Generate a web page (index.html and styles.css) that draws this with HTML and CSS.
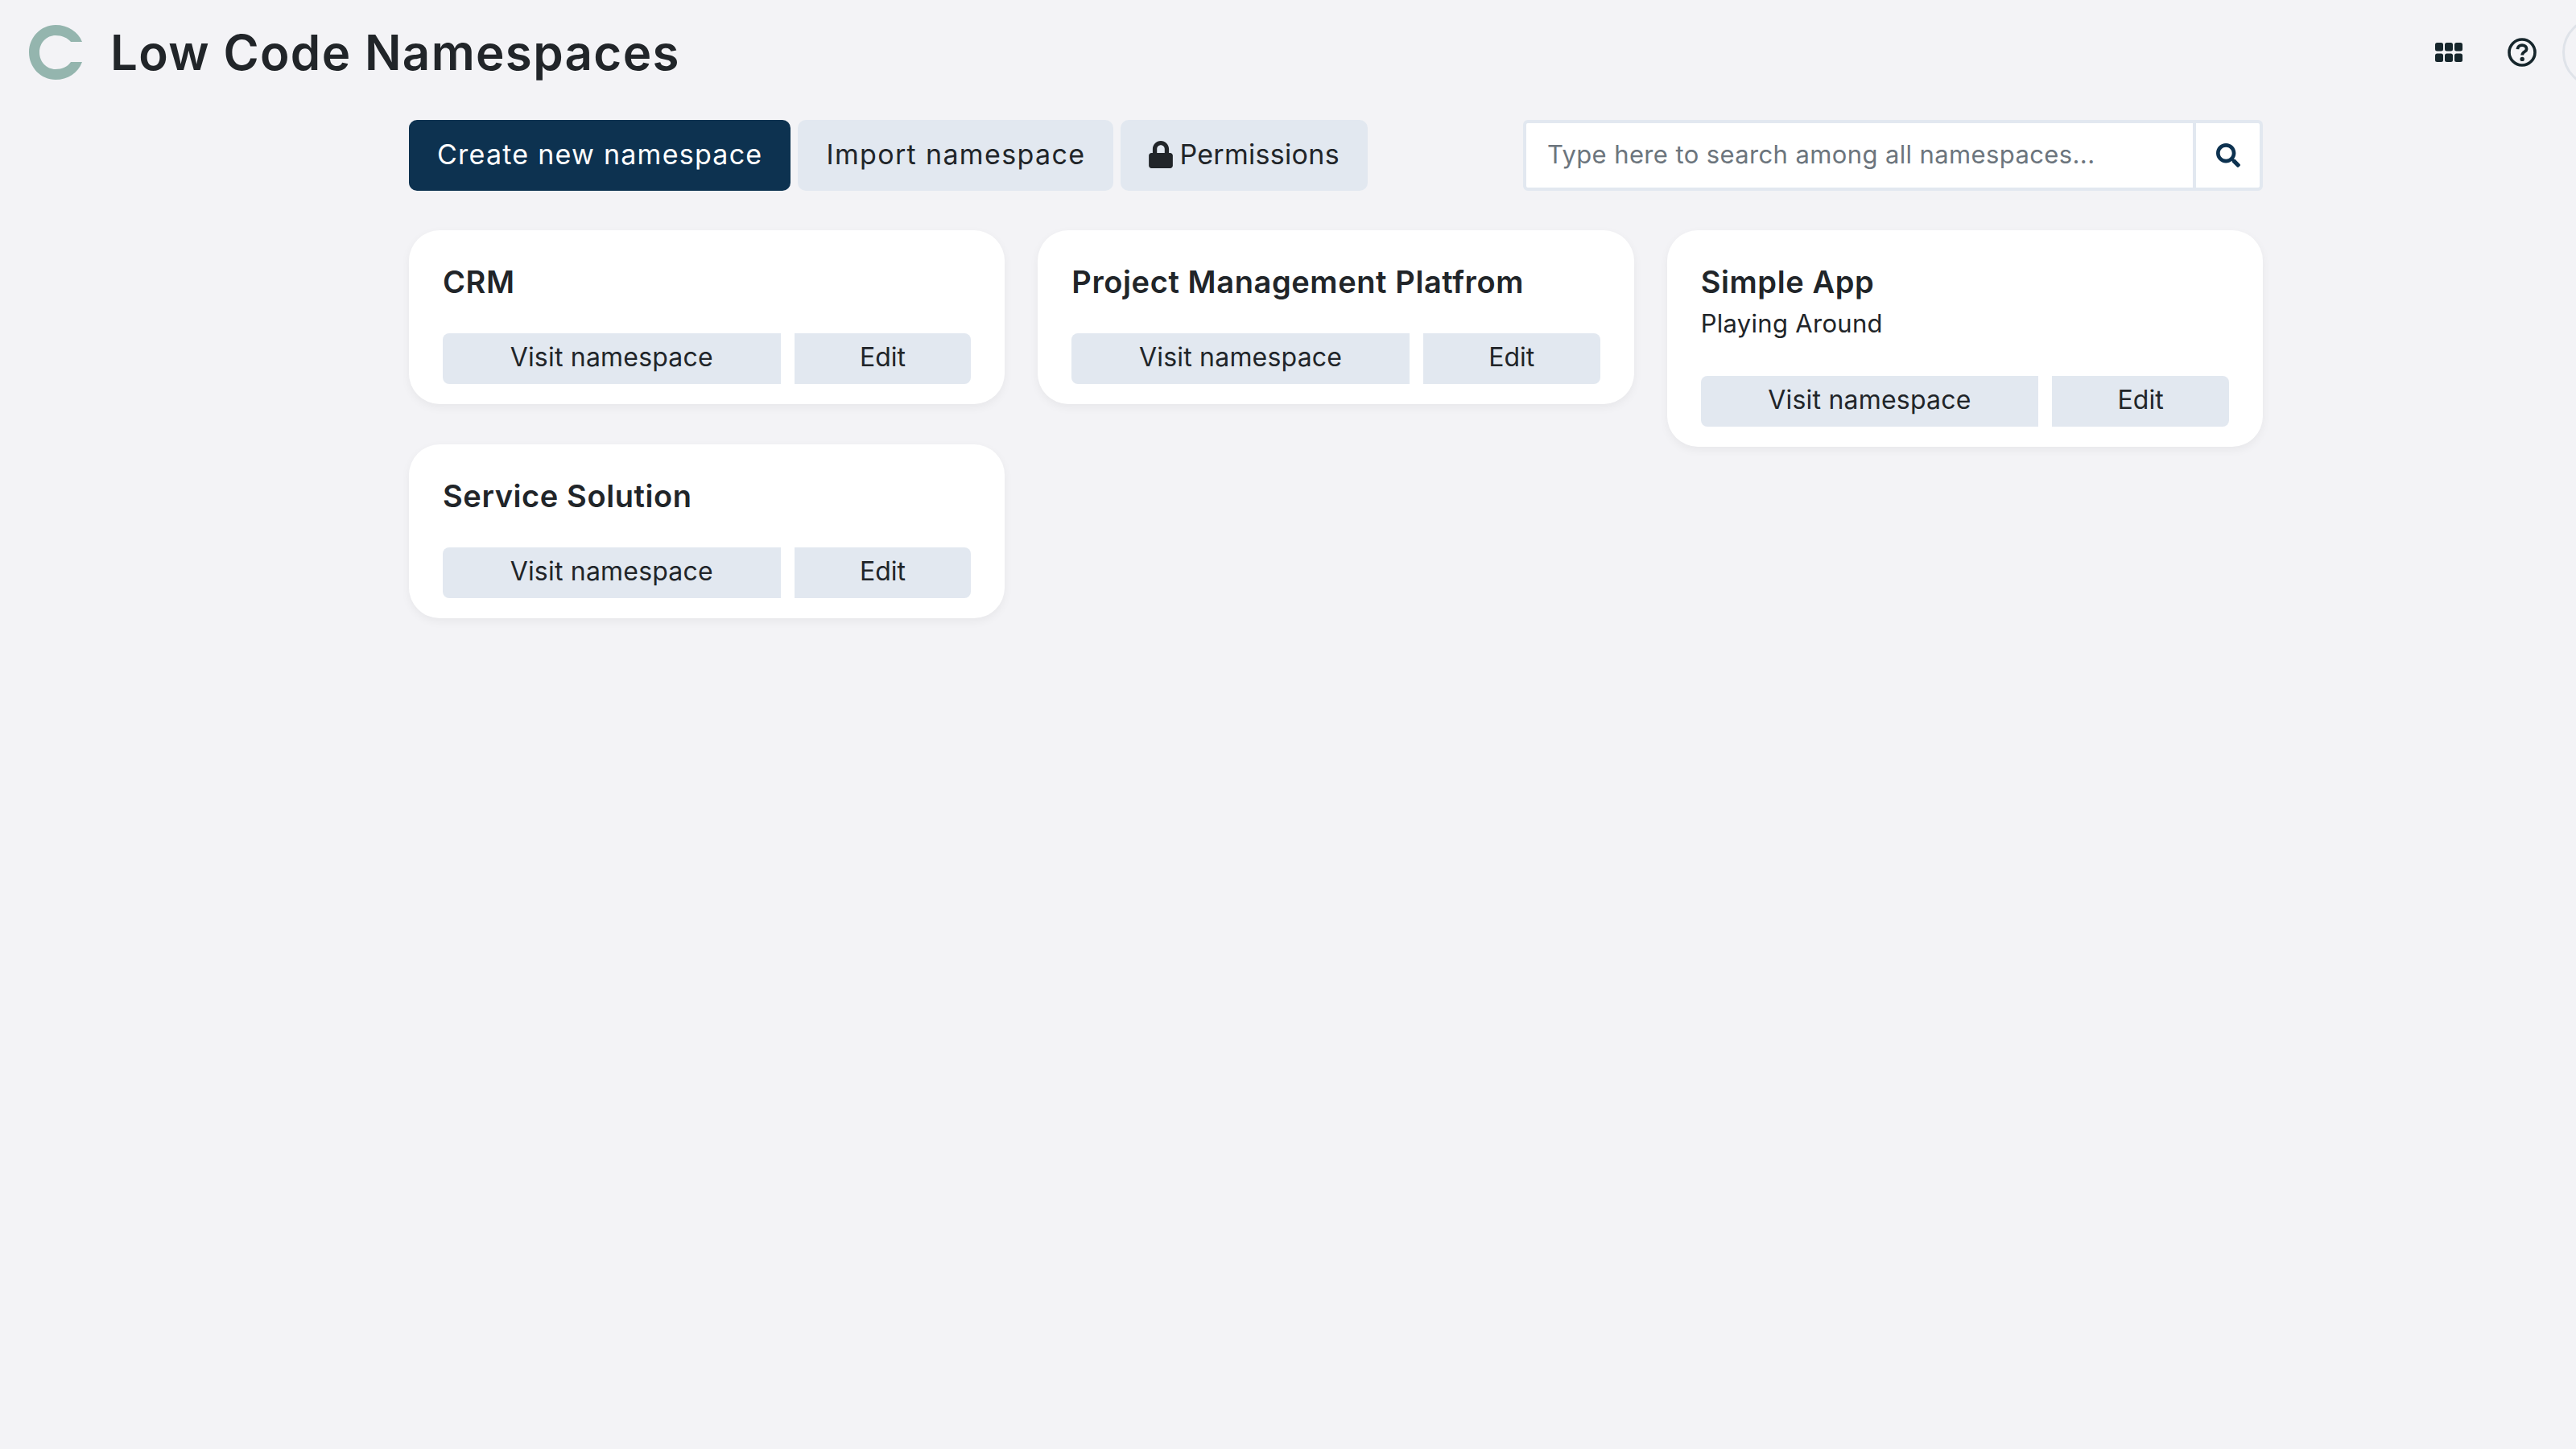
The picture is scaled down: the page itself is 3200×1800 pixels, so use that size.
FILE: index.html
```html
<!DOCTYPE html>
<html lang="en">
<head>
<meta charset="utf-8">
<title>Low Code Namespaces</title>
<link rel="stylesheet" href="styles.css">
</head>
<body>
<header class="topbar">
  <svg class="logo" viewBox="0 0 66 68"><path fill="#94b5ae" d="M66 21C61 8 48 0 33 0C15 0 0 15 0 34C0 53 15 68 33 68C48 68 61 60 66 46H52C48 52 41 55 33 55C22 55 13 46 13 34C13 22 22 13 33 13C41 13 48 16 52 21Z"/></svg>
  <h1 class="page-title">Low Code Namespaces</h1>
  <div class="top-actions">
    <svg class="grid-icon" viewBox="0 0 34 24"><g fill="#16262c"><rect width="10" height="10.5" rx="2.5"/><rect x="12" width="10" height="10.5" rx="2.5"/><rect x="24" width="10" height="10.5" rx="2.5"/><rect y="13.5" width="10" height="10.5" rx="2.5"/><rect x="12" y="13.5" width="10" height="10.5" rx="2.5"/><rect x="24" y="13.5" width="10" height="10.5" rx="2.5"/></g></svg>
    <svg class="help-icon" viewBox="0 0 36 36"><circle cx="18" cy="18" r="16" fill="none" stroke="#16262c" stroke-width="3.6"/><path d="M12.4 14.2C12.6 11 15 9.2 18 9.2C21.4 9.2 23.6 11.2 23.6 13.9C23.6 17.4 18.2 17.2 18.2 21.4" fill="none" stroke="#16262c" stroke-width="3.8"/><circle cx="18.2" cy="26.4" r="2.7" fill="#16262c"/></svg>
    <div class="avatar"></div>
  </div>
</header>
<main class="content">
  <div class="toolbar">
    <button class="btn btn-primary">Create new namespace</button>
    <button class="btn btn-import">Import namespace</button>
    <button class="btn btn-perm"><svg class="lock" viewBox="0 0 448 512"><path fill="#212529" d="M400 224h-24v-72C376 68.2 307.8 0 224 0S72 68.2 72 152v72H48c-26.5 0-48 21.5-48 48v192c0 26.5 21.5 48 48 48h352c26.5 0 48-21.5 48-48V272c0-26.5-21.5-48-48-48zm-104 0H152v-72c0-39.7 32.3-72 72-72s72 32.3 72 72v72z"/></svg>Permissions</button>
    <form class="search">
      <input class="search-input" type="text" placeholder="Type here to search among all namespaces...">
      <button class="search-btn" type="button"><svg class="search-icon" viewBox="0 0 512 512"><path fill="#0d3250" d="M505 442.7L405.3 343c-4.5-4.5-10.6-7-17-7H372c27.6-35.3 44-79.7 44-128C416 93.1 322.9 0 208 0S0 93.1 0 208s93.1 208 208 208c48.3 0 92.7-16.4 128-44v16.3c0 6.4 2.5 12.5 7 17l99.7 99.7c9.4 9.4 24.6 9.4 33.9 0l28.3-28.3c9.4-9.4 9.4-24.6.1-34zM208 336c-70.7 0-128-57.2-128-128 0-70.7 57.2-128 128-128 70.7 0 128 57.2 128 128 0 70.7-57.2 128-128 128z"/></svg></button>
    </form>
  </div>
  <section class="cards">
    <div class="card-column">
      <article class="card">
        <h2 class="card-title">CRM</h2>
        <div class="card-actions"><a class="action visit">Visit namespace</a><a class="action edit">Edit</a></div>
      </article>
      <article class="card">
        <h2 class="card-title">Service Solution</h2>
        <div class="card-actions"><a class="action visit">Visit namespace</a><a class="action edit">Edit</a></div>
      </article>
    </div>
    <div class="card-column">
      <article class="card">
        <h2 class="card-title">Project Management Platfrom</h2>
        <div class="card-actions"><a class="action visit">Visit namespace</a><a class="action edit">Edit</a></div>
      </article>
    </div>
    <div class="card-column">
      <article class="card">
        <h2 class="card-title">Simple App</h2>
        <p class="card-sub">Playing Around</p>
        <div class="card-actions"><a class="action visit">Visit namespace</a><a class="action edit">Edit</a></div>
      </article>
    </div>
  </section>
</main>
</body>
</html>
```

FILE: styles.css
```css
* { box-sizing: border-box; }
html, body { margin: 0; height: 100%; }
body {
  background: #f3f3f6;
  color: #212529;
  font-family: Inter, "Liberation Sans", sans-serif;
  overflow: hidden;
}
.topbar {
  display: flex;
  align-items: center;
  height: 130px;
  padding-left: 36px;
}
.logo { width: 66px; height: 68px; flex: none; }
.page-title {
  margin: 0 0 0 35px;
  font-size: 60px;
  font-weight: 600;
  letter-spacing: 1.35px;
  line-height: 1;
}
.top-actions {
  margin-left: auto;
  display: flex;
  align-items: center;
  width: 175px;
  flex: none;
}
.grid-icon { width: 34px; height: 24px; flex: none; }
.help-icon { width: 36px; height: 36px; margin-left: 56px; flex: none; }
.avatar {
  width: 88px;
  height: 88px;
  flex: none;
  margin-left: 32px;
  border: 3px solid #dfe3e9;
  border-radius: 50%;
}
.content { margin-left: 508px; width: 2303px; padding-top: 19px; }
.toolbar { display: flex; align-items: stretch; gap: 9px; height: 88px; }
.btn {
  display: flex;
  align-items: center;
  padding: 0 35px 3px;
  border: 0;
  border-radius: 10px;
  background: #e2e8f0;
  color: #212529;
  font-family: inherit;
  font-size: 34px;
  letter-spacing: 1.25px;
}
.btn-primary { background: #0d3250; color: #fff; }
.btn-import { letter-spacing: 1.35px; }
.btn-perm { letter-spacing: 0.3px; }
.lock { width: 30px; height: 34px; margin-right: 8px; }
.search {
  display: flex;
  margin-left: auto;
  width: 919px;
  border: 4px solid #e2e8f0;
  border-radius: 6px;
  background: #fff;
}
.search-input {
  flex: 1;
  min-width: 0;
  padding: 0 26px 3px;
  border: 0;
  outline: 0;
  background: transparent;
  font-family: inherit;
  font-size: 31px;
  letter-spacing: 0.38px;
  color: #212529;
}
.search-input::placeholder { color: #6c757d; opacity: 1; }
.search-btn {
  display: flex;
  align-items: center;
  justify-content: center;
  width: 83px;
  padding: 0;
  border: 0;
  border-left: 4px solid #e2e8f0;
  background: transparent;
}
.search-icon { width: 30px; height: 30px; }
.cards {
  display: grid;
  grid-template-columns: repeat(3, 1fr);
  column-gap: 41px;
  align-items: start;
  margin-top: 49px;
}
.card-column { display: flex; flex-direction: column; gap: 50px; }
.card {
  padding: 42px 42px 25px;
  background: #fff;
  border-radius: 38px;
  box-shadow: 0 4px 12px rgba(0, 0, 0, 0.05);
}
.card-title {
  margin: 0;
  font-size: 38px;
  font-weight: 600;
  letter-spacing: 0.6px;
  line-height: 44px;
}
.card-sub {
  margin: 8px 0 0;
  padding-bottom: 1px;
  font-size: 31px;
  letter-spacing: 0.3px;
  line-height: 44px;
  font-weight: 400;
}
.card-actions { display: flex; gap: 17px; margin-top: 42px; }
.action {
  display: flex;
  align-items: center;
  justify-content: center;
  height: 63px;
  padding-bottom: 4px;
  background: #e2e8f0;
  font-size: 32px;
}
.visit { flex: none; width: 419.5px; border-radius: 8px 0 0 8px; letter-spacing: 0.2px; }
.edit { flex: 1; border-radius: 0 8px 8px 0; }
```
